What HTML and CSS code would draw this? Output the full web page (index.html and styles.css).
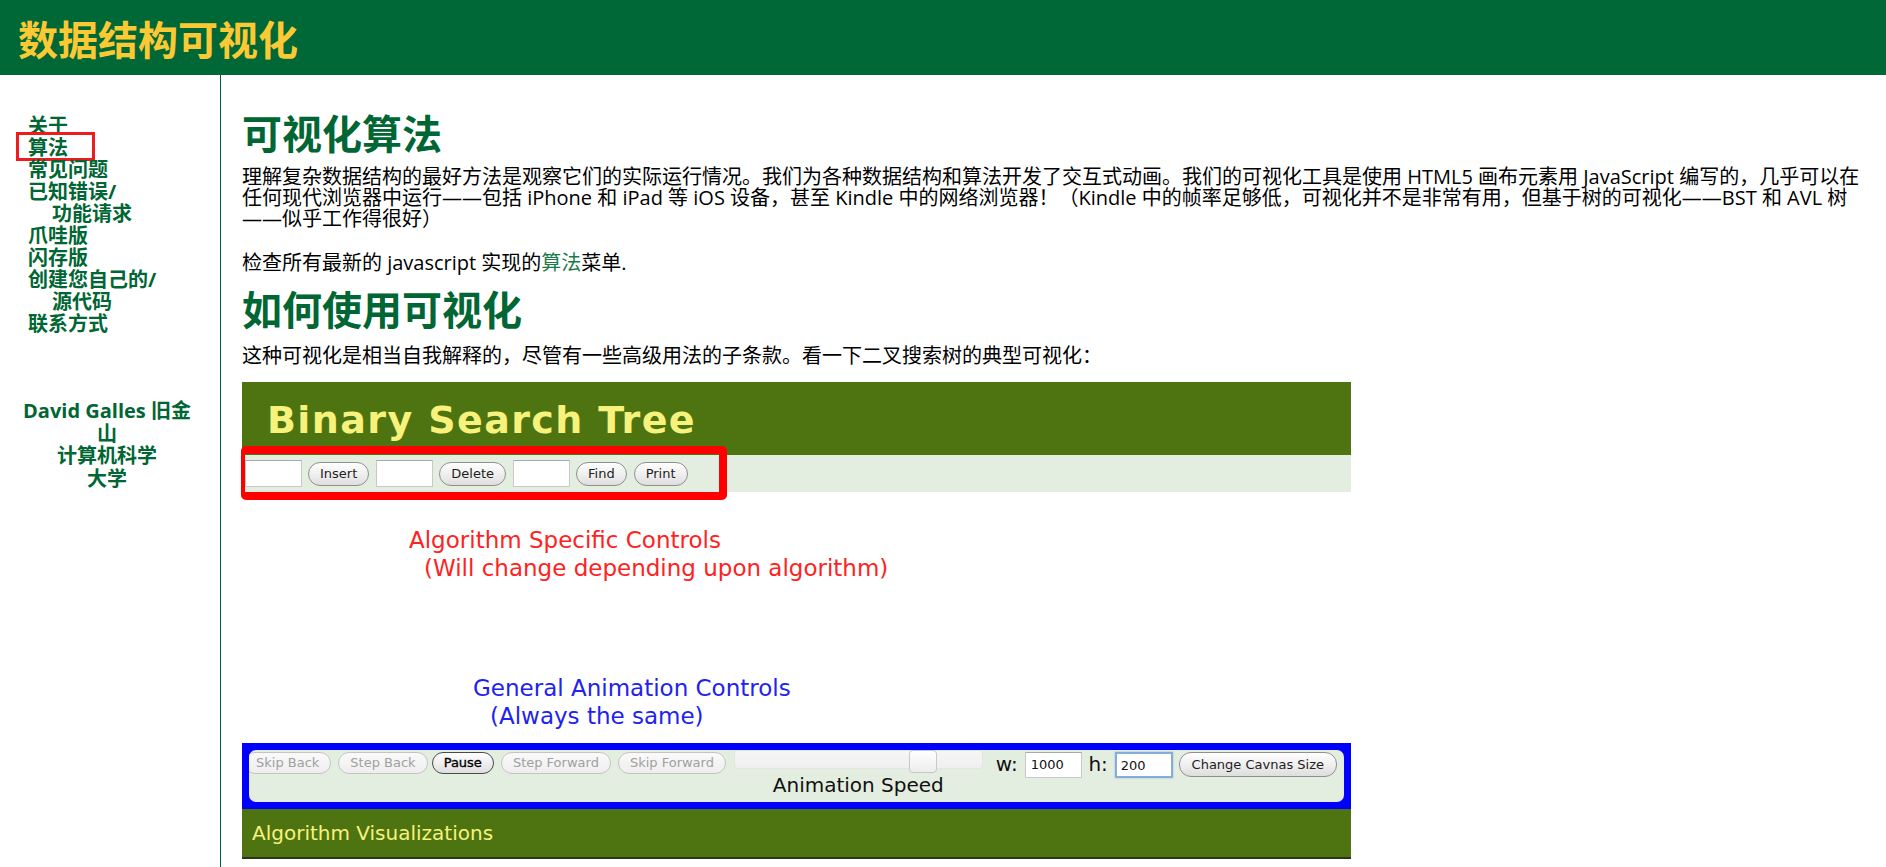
FILE: index.html
```html
<!DOCTYPE html>
<html lang="zh-CN">
<head>
<meta charset="utf-8">
<title>数据结构可视化</title>
<link rel="stylesheet" href="styles.css">
</head>
<body>
<header class="site-header">
  <h1 class="site-title">数据结构可视化</h1>
</header>
<div class="layout">
  <aside class="sidebar">
    <ul class="nav">
      <li><a href="#">关于</a></li>
      <li><a href="#">算法</a><span class="mark-box"></span></li>
      <li><a href="#">常见问题</a></li>
      <li><a href="#">已知错误/<br>功能请求</a></li>
      <li><a href="#">爪哇版</a></li>
      <li><a href="#">闪存版</a></li>
      <li><a href="#">创建您自己的/<br>源代码</a></li>
      <li><a href="#">联系方式</a></li>
    </ul>
    <p class="credit">David Galles 旧金山<br>计算机科学<br>大学</p>
  </aside>
  <main class="content">
    <h2 class="page-title">可视化算法</h2>
    <p class="intro">理解复杂数据结构的最好方法是观察它们的实际运行情况。我们为各种数据结构和算法开发了交互式动画。我们的可视化工具是使用 HTML5 画布元素用 JavaScript 编写的，几乎可以在任何现代浏览器中运行——包括 iPhone 和 iPad 等 iOS 设备，甚至 Kindle 中的网络浏览器！（Kindle 中的帧率足够低，可视化并不是非常有用，但基于树的可视化——BST 和 AVL 树——似乎工作得很好）</p>
    <p class="check">检查所有最新的 javascript 实现的<a href="#" class="inline-link">算法</a>菜单.</p>
    <h2 class="section-title">如何使用可视化</h2>
    <p class="usage">这种可视化是相当自我解释的，尽管有一些高级用法的子条款。看一下二叉搜索树的典型可视化：</p>

    <figure class="shot">
      <div class="shot-title">Binary Search Tree</div>
      <div class="algo-strip">
        <span class="field"></span><span class="pill">Insert</span>
        <span class="field"></span><span class="pill">Delete</span>
        <span class="field"></span><span class="pill">Find</span>
        <span class="pill">Print</span>
      </div>
      <span class="red-frame"></span>
      <div class="notes">
        <div class="note red">
          <div class="n1">Algorithm Specific Controls</div>
          <div class="n2">(Will change depending upon algorithm)</div>
        </div>
        <div class="note blue">
          <div class="n3">General Animation Controls</div>
          <div class="n4">(Always the same)</div>
        </div>
      </div>
      <div class="anim-frame">
        <div class="anim-inner">
          <span class="pill off first">Skip Back</span>
          <span class="pill off">Step Back</span>
          <span class="pill active">Pause</span>
          <span class="pill off">Step Forward</span>
          <span class="pill off">Skip Forward</span>
          <div class="speed">
            <div class="track"><span class="thumb"></span></div>
            <div class="speed-label">Animation Speed</div>
          </div>
          <span class="dim-label w-label">w:</span>
          <span class="field small">1000</span>
          <span class="dim-label h-label">h:</span>
          <span class="field small focused">200</span>
          <span class="pill size-btn">Change Cavnas Size</span>
        </div>
      </div>
      <div class="shot-footer">Algorithm Visualizations</div>
    </figure>
  </main>
</div>
</body>
</html>
```

FILE: styles.css
```css
* { box-sizing: border-box; }

html, body {
  margin: 0;
  padding: 0;
  background: #ffffff;
}

body {
  font-family: "Open Sans", "Noto Sans CJK SC", sans-serif;
  color: #000000;
}

/* ---------- header ---------- */
.site-header {
  height: 75px;
  background: #006837;
  display: flex;
  align-items: center;
  padding-left: 18px;
}

.site-title {
  margin: 0;
  font-family: "Noto Sans CJK SC", sans-serif;
  font-size: 40px;
  font-weight: 700;
  line-height: 40px;
  color: #fbc933;
}

/* ---------- layout ---------- */
.layout {
  display: flex;
  min-height: calc(100vh - 75px);
}

.sidebar {
  flex: 0 0 221px;
  border-right: 1px solid #005f32;
  padding-top: 40px;
}

.nav {
  list-style: none;
  margin: 0;
  padding: 0 0 0 28px;
  font-size: 20px;
  font-weight: 700;
  line-height: 22px;
}

.nav li {
  position: relative;
  padding-left: 24px;
  text-indent: -24px;
}

.nav a {
  color: #006633;
  text-decoration: none;
}

.mark-box {
  position: absolute;
  left: -12px;
  top: -5px;
  width: 79px;
  height: 29px;
  border: 3px solid #ee1c1c;
}

.credit {
  margin: 65px 0 0 15px;
  width: 184px;
  text-align: center;
  font-size: 20px;
  font-weight: 700;
  line-height: 22.5px;
  color: #006633;
}

/* ---------- main ---------- */
.content {
  flex: 1;
  min-width: 0;
  padding: 0 16px 0 21px;
}

.page-title,
.section-title {
  font-family: "Noto Sans CJK SC", sans-serif;
  font-size: 40px;
  font-weight: 700;
  line-height: 48px;
  color: #006633;
  margin: 0;
}

.page-title { margin: 33px 0 10px; }
.section-title { margin: 0 0 13px; }

.content p {
  font-size: 20px;
  line-height: 21px;
  margin: 0;
}

.content .intro { margin-bottom: 23px; }
.content .check { margin-bottom: 11px; }
.content .usage { margin-bottom: 16px; }

.inline-link {
  color: #1b7a4a;
  text-decoration: none;
}

/* ---------- screenshot figure ---------- */
.shot {
  position: relative;
  width: 1109px;
  margin: 0;
  font-family: "DejaVu Sans", sans-serif;
}

.shot-title {
  height: 73px;
  background: #4e7412;
  color: #f7f27c;
  font-size: 38px;
  font-weight: 700;
  letter-spacing: 1.4px;
  line-height: 37px;
  padding: 20px 0 0 25px;
}

.algo-strip {
  height: 37px;
  background: #e3eee0;
  display: flex;
  align-items: center;
  padding-left: 3px;
}

.field {
  display: inline-block;
  width: 57px;
  height: 27px;
  background: #ffffff;
  border: 1px solid #c9c9c9;
  border-top-color: #a9a9a9;
  margin-right: 6px;
  font-size: 13px;
  line-height: 24px;
  padding-left: 5px;
  color: #111;
}

.pill {
  display: inline-block;
  height: 24px;
  line-height: 22px;
  padding: 0 11px;
  margin-right: 7px;
  border: 1px solid #8f8f8f;
  border-radius: 12px;
  background: linear-gradient(#ffffff, #ececec 60%, #dedede);
  font-size: 13px;
  color: #1d1d1d;
  white-space: nowrap;
}

.red-frame {
  position: absolute;
  left: -1px;
  top: 64px;
  width: 486px;
  height: 54px;
  border: 8px solid #ff0000;
  border-left-width: 4px;
  border-radius: 5px;
}

.notes {
  height: 251px;
  padding-top: 34px;
}

.note {
  font-size: 23px;
  line-height: 28px;
}

.note.red { color: #ff2222; }
.note.blue { color: #2222ee; margin-top: 92px; }

.n1 { padding-left: 167px; }
.n2 { padding-left: 182px; }
.n3 { padding-left: 231px; }
.n4 { padding-left: 248px; }

.anim-frame {
  background: #0000ff;
  padding: 7px;
  height: 66px;
}

.anim-inner {
  height: 52px;
  background: #e3eee0;
  border-radius: 7px;
  overflow: hidden;
  display: flex;
  align-items: flex-start;
  padding: 2px 0 0 0;
}

.anim-inner .pill {
  height: 22px;
  line-height: 20px;
  border-radius: 11px;
}

.pill.off {
  color: #a0a0a0;
  border-color: #c4c4c4;
  background: linear-gradient(#fafafa, #eeeeee);
}

.pill.first { margin-left: -5px; }

.pill.active {
  color: #000;
  border: 1.5px solid #4a4a4a;
  padding: 0 11px;
  margin-left: -3px;
  -webkit-text-stroke: 0.35px #000;
}

.speed {
  width: 250px;
  margin-left: 1px;
  margin-top: -2px;
}

.track {
  position: relative;
  height: 19px;
  background: linear-gradient(#f6f6f6, #efefef);
  border: 1px solid #e4e4e4;
  border-radius: 4px;
}

.thumb {
  position: absolute;
  left: 174px;
  top: -1px;
  width: 28px;
  height: 23px;
  background: linear-gradient(#ffffff, #ededed);
  border: 1px solid #c8c8c8;
  border-radius: 4px;
}

.speed-label {
  text-align: center;
  font-size: 20px;
  line-height: 22px;
  margin-top: 5px;
  color: #111;
}

.dim-label {
  font-size: 20px;
  line-height: 24px;
  color: #111;
}

.w-label { margin-left: 13px; }
.h-label { margin-left: 6px; }

.field.small {
  width: 58px;
  height: 26px;
  margin-left: 7px;
  margin-right: 0;
}

.field.focused {
  border: 2px solid #86acd8;
  box-shadow: 0 0 2px #9fc0e8;
  padding-left: 4px;
}

.pill.size-btn {
  margin-left: 6px;
  height: 25px;
  line-height: 23px;
  border-radius: 12px;
  padding: 0 12px;
}

.shot-footer {
  height: 50px;
  background: #4e7412;
  border-bottom: 2px solid #2c3320;
  color: #f7f27c;
  font-size: 20px;
  line-height: 48px;
  padding-left: 10px;
}
```
